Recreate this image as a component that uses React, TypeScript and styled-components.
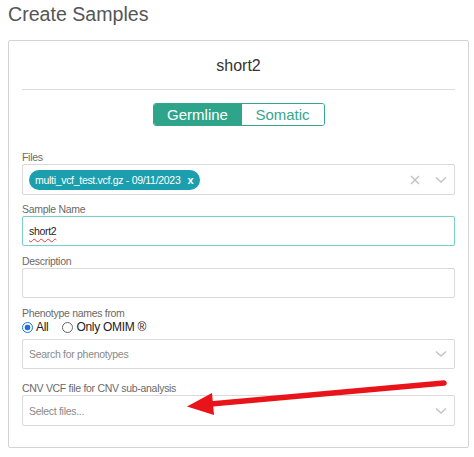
import React from "react";
import styled, { createGlobalStyle } from "styled-components";

const GlobalStyle = createGlobalStyle`
  body {
    margin: 0;
    background: #fff;
    font-family: "Liberation Sans", Arial, sans-serif;
  }
`;

const Page = styled.div`
  position: relative;
  width: 474px;
  height: 457px;
  overflow: hidden;
`;

const Title = styled.h1`
  margin: 0;
  padding: 0 0 0 8px;
  font-size: 19.6px;
  font-weight: 400;
  line-height: 29px;
  color: #555;
`;

const Card = styled.div`
  margin: 11px 0 0 8px;
  width: 461px;
  box-sizing: border-box;
  border: 1px solid #d4d4d4;
  border-radius: 2px;
  padding: 13px 13px 21px;
`;

const Heading = styled.div`
  text-align: center;
  font-size: 16px;
  line-height: 24px;
  color: #333;
`;

const Divider = styled.hr`
  margin: 11px 0 0;
  border: 0;
  border-top: 1.5px solid #ddd;
`;

const ToggleRow = styled.div`
  display: flex;
  justify-content: center;
  margin-top: 13px;
`;

const Toggle = styled.div`
  display: flex;
  height: 23px;
  border: 1px solid #36a68e;
  border-radius: 3px;
  overflow: hidden;
  box-sizing: border-box;
`;

const ToggleOption = styled.div<{ $active?: boolean }>`
  display: flex;
  align-items: center;
  justify-content: center;
  width: ${(p) => (p.$active ? "88px" : "82px")};
  font-size: 15px;
  color: ${(p) => (p.$active ? "#fff" : "#36a68e")};
  background: ${(p) => (p.$active ? "#2ea58b" : "#fff")};
`;

const Label = styled.div<{ $gap: number }>`
  margin-top: ${(p) => p.$gap}px;
  font-size: 10.5px;
  letter-spacing: -0.3px;
  line-height: 13px;
  color: #6a6a6a;
`;

const Box = styled.div<{ $height?: number; $focus?: boolean }>`
  display: flex;
  align-items: center;
  height: ${(p) => p.$height ?? 31}px;
  box-sizing: border-box;
  padding: 0 6px;
  border: 1px solid ${(p) => (p.$focus ? "#7ccfc6" : "#d9d9d9")};
  border-radius: 2px;
  box-shadow: ${(p) => (p.$focus ? "0 0 1px #a5e0d9" : "none")};
`;

const Value = styled.span`
  flex: 1;
  font-size: 10.5px;
  letter-spacing: -0.3px;
  color: #222;
  text-decoration: underline wavy #e04040;
  text-decoration-thickness: 1px;
  text-underline-offset: 3px;
`;

const Placeholder = styled.span`
  flex: 1;
  font-size: 10.5px;
  letter-spacing: -0.3px;
  color: #8a8a8a;
`;

const Chips = styled.div`
  flex: 1;
  display: flex;
`;

const Chip = styled.span`
  display: inline-flex;
  align-items: center;
  height: 20px;
  padding: 0 7px 0 6px;
  border-radius: 10px;
  background: #1b9eae;
  color: #fff;
  font-size: 10.5px;
  letter-spacing: -0.3px;
  gap: 7px;
`;

const ChipClose = styled.span`
  font-weight: 700;
  font-size: 11px;
`;

const Indicators = styled.div`
  display: flex;
  align-items: center;
  gap: 15px;
  color: #b5b5b5;
  padding-right: 1px;
`;

const RadioRow = styled.div`
  display: flex;
  align-items: center;
  height: 14px;
  margin-bottom: 5px;
  font-size: 12px;
  letter-spacing: -0.3px;
  color: #222;
`;

const RadioItem = styled.label`
  display: flex;
  align-items: center;
  gap: 3px;
  margin-right: 14px;
`;

const RadioDot = styled.span<{ $checked?: boolean }>`
  width: 11px;
  height: 11px;
  box-sizing: border-box;
  border-radius: 50%;
  border: 1px solid ${(p) => (p.$checked ? "#1f6fd6" : "#666")};
  background: ${(p) => (p.$checked ? "radial-gradient(circle, #1f6fd6 0 2.6px, #fff 3.2px)" : "#fff")};
`;

const Arrow = styled.svg`
  position: absolute;
  left: 0;
  top: 0;
  pointer-events: none;
`;

const Chevron = () => (
  <svg width="12" height="8" viewBox="0 0 12 8">
    <path d="M1 1.5 L6 6 L11 1.5" fill="none" stroke="#c2c2c2" strokeWidth="1.4" />
  </svg>
);

const Cross = () => (
  <svg width="10" height="10" viewBox="0 0 10 10">
    <path d="M1 1 L9 9 M9 1 L1 9" fill="none" stroke="#c2c2c2" strokeWidth="1.4" />
  </svg>
);

export default function App() {
  return (
    <Page>
      <GlobalStyle />
      <Title>Create Samples</Title>
      <Card>
        <Heading>short2</Heading>
        <Divider />
        <ToggleRow>
          <Toggle>
            <ToggleOption $active>Germline</ToggleOption>
            <ToggleOption>Somatic</ToggleOption>
          </Toggle>
        </ToggleRow>

        <Label $gap={25}>Files</Label>
        <Box>
          <Chips>
            <Chip>
              multi_vcf_test.vcf.gz - 09/11/2023 <ChipClose>x</ChipClose>
            </Chip>
          </Chips>
          <Indicators>
            <Cross />
            <Chevron />
          </Indicators>
        </Box>

        <Label $gap={8}>Sample Name</Label>
        <Box $height={30} $focus>
          <Value>short2</Value>
        </Box>

        <Label $gap={9}>Description</Label>
        <Box $height={30} />

        <Label $gap={9}>Phenotype names from</Label>
        <RadioRow>
          <RadioItem>
            <RadioDot $checked />
            All
          </RadioItem>
          <RadioItem>
            <RadioDot />
            Only OMIM ®
          </RadioItem>
        </RadioRow>
        <Box $height={30}>
          <Placeholder>Search for phenotypes</Placeholder>
          <Indicators>
            <Chevron />
          </Indicators>
        </Box>

        <Label $gap={13}>CNV VCF file for CNV sub-analysis</Label>
        <Box>
          <Placeholder>Select files...</Placeholder>
          <Indicators>
            <Chevron />
          </Indicators>
        </Box>
      </Card>

      <Arrow width="474" height="457" viewBox="0 0 474 457">
        <line x1="444" y1="383" x2="205" y2="404.5" stroke="#e8141a" strokeWidth="5.5" strokeLinecap="round" />
        <polygon points="187,406.5 212,393 214,415" fill="#e8141a" />
      </Arrow>
    </Page>
  );
}
